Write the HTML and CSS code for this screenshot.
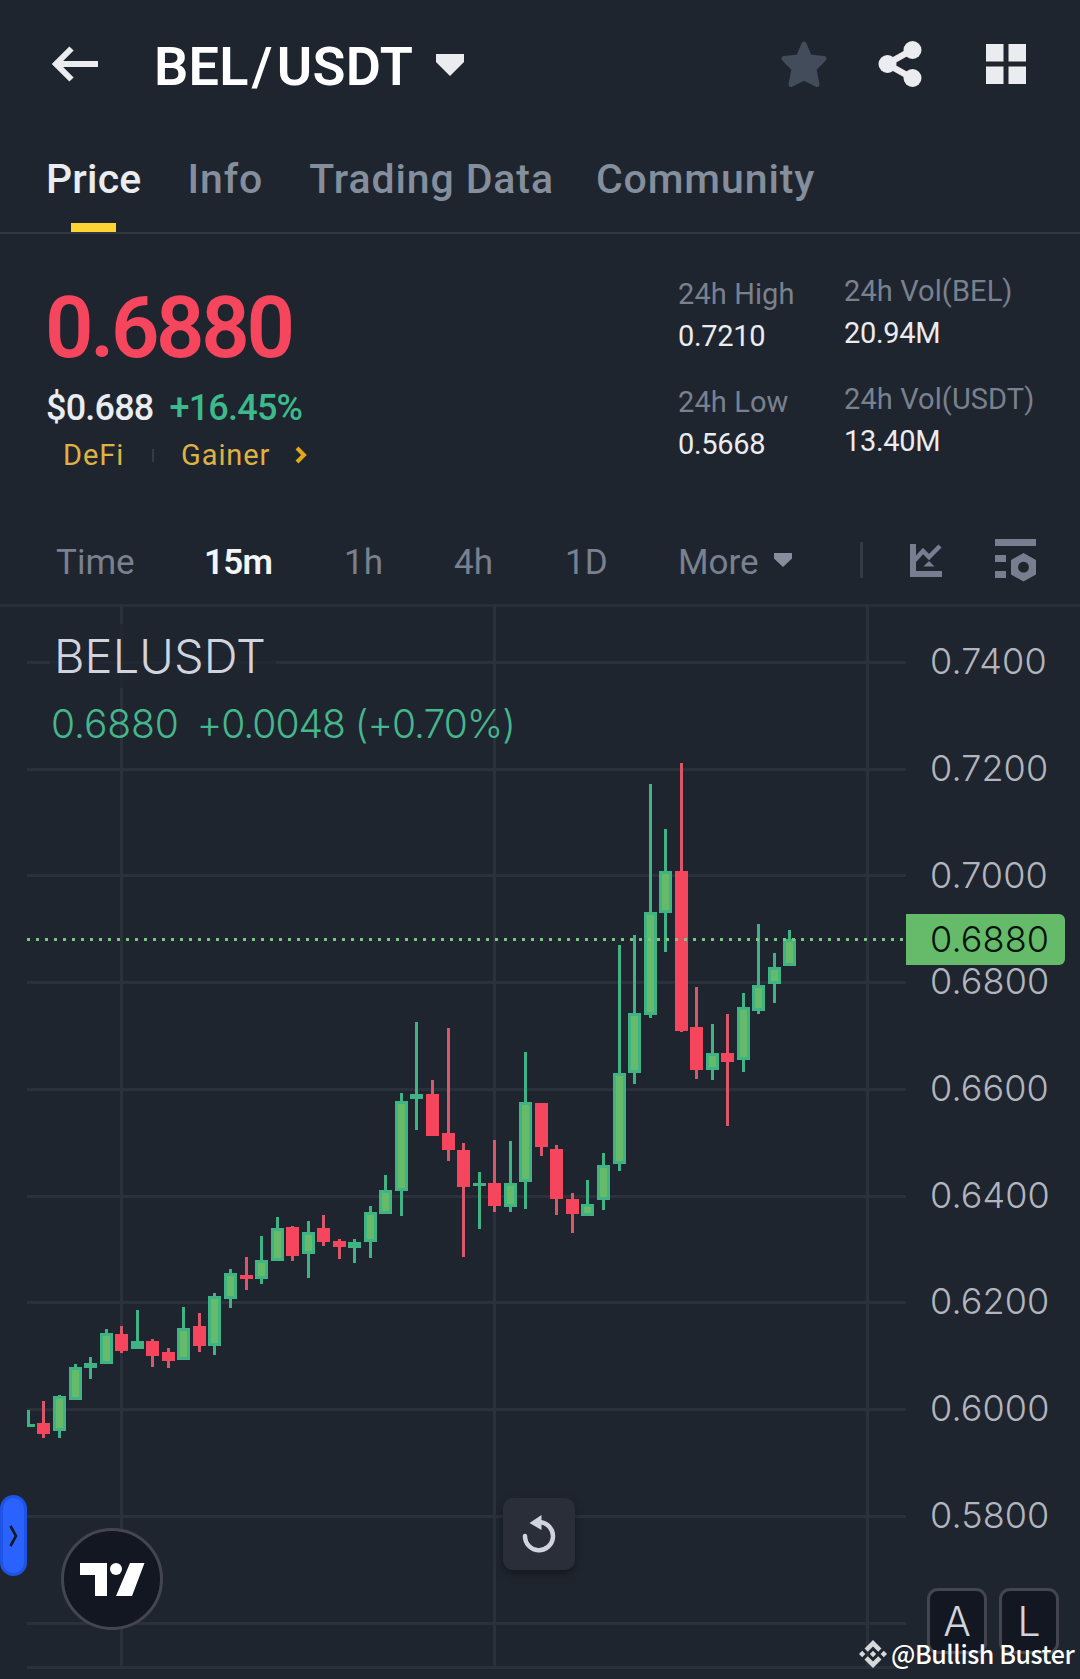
FILE: index.html
```
<!DOCTYPE html>
<html lang="en">
<head>
    <meta charset="UTF-8">
    <meta name="viewport" content="width=device-width, initial-scale=1.0">
    <title>BEL/USDT</title>
    <link rel="stylesheet" href="styles.css">
</head>
<body>

    <header class="header">
        <svg class="back" width="46" height="36" viewBox="0 0 46 36">
            <path d="M19.500 2.500L4 18L19.500 33.500M4 18H46" fill="none" stroke="#eaecef" stroke-width="6"/>
        </svg>
        <h1 class="pair">BEL<span class="slash">/</span>USDT</h1>
        <svg class="caret" width="28" height="22" viewBox="0 0 28 22">
            <path d="M0 0H28V8L14 22L0 8Z" fill="#eaecef"/>
        </svg>
        <div class="actions">
            <svg width="46" height="46" viewBox="0 0 46 46">
                <path d="M23 3L28.500 16L43 17.500L33 28L36 43.500L23 37L10 43.500L13 28L3 17.500L17.500 16Z" fill="#434c5a" stroke="#434c5a" stroke-width="5" stroke-linejoin="round"/>
            </svg>
            <svg width="44" height="46" viewBox="0 0 44 46">
                <path d="M34 9L9 23L34 37" fill="none" stroke="#eaecef" stroke-width="6.500"/>
                <circle cx="34.500" cy="9" r="9" fill="#eaecef"/>
                <circle cx="9.500" cy="23" r="9" fill="#eaecef"/>
                <circle cx="34.500" cy="37" r="9" fill="#eaecef"/>
            </svg>
            <svg width="40" height="40" viewBox="0 0 40 40">
                <path d="M0 0h17.500v17.500H0zM22.500 0H40v17.500H22.500zM0 22.500h17.500V40H0zM22.500 22.500H40V40H22.500z" fill="#eaecef"/>
            </svg>
        </div>
    </header>

    <nav class="tabs">
        <a class="tab active">Price</a>
        <a class="tab">Info</a>
        <a class="tab trading">Trading Data</a>
        <a class="tab">Community</a>
    </nav>

    <section class="ticker">
        <div class="quote">
            <div class="last">0.6880</div>
            <div class="sub"><span class="usd">$0.688</span><span class="change">+16.45%</span></div>
            <div class="tags">
                <span>DeFi</span>
                <i class="tag-sep"></i>
                <span>Gainer</span>
                <svg width="12" height="18" viewBox="0 0 12 18">
                    <path d="M2 2L9 9L2 16" fill="none" stroke="#e0a91b" stroke-width="4"/>
                </svg>
            </div>
        </div>
        <div class="stats">
            <div class="stat"><span class="label">24h High</span><span class="value">0.7210</span></div>
            <div class="stat"><span class="label">24h Low</span><span class="value">0.5668</span></div>
        </div>
        <div class="stats volume">
            <div class="stat"><span class="label">24h Vol(BEL)</span><span class="value">20.94M</span></div>
            <div class="stat"><span class="label">24h Vol(USDT)</span><span class="value">13.40M</span></div>
        </div>
    </section>

    <nav class="intervals">
        <a class="time">Time</a>
        <a class="m15 active">15m</a>
        <a class="h1">1h</a>
        <a class="h4">4h</a>
        <a class="d1">1D</a>
        <a class="more">More</a>
        <svg class="more-caret" width="18" height="14" viewBox="0 0 18 14">
            <path d="M0 0H18V5.500L9 14L0 5.500Z" fill="#848e9c"/>
        </svg>
        <i class="bar-sep"></i>
        <svg class="ico-chart" width="32" height="33" viewBox="0 0 32 33">
            <path d="M0 0H6V27H32V33H0Z" fill="#767e90"/>
            <path d="M4 17L13 7L19 13L30 2" fill="none" stroke="#767e90" stroke-width="4.500"/>
            <path d="M19 17L24.500 22.500H13.500Z" fill="#767e90"/>
        </svg>
        <svg width="41" height="43" viewBox="0 0 41 43">
            <path d="M0 0H41V7H0ZM0 16H11V23H0ZM0 32H11V39H0Z" fill="#767e90"/>
            <path fill-rule="evenodd" d="M28.500 14L41 21V35.500L28.500 42.500L16 35.500V21ZM28.500 22.800a5.400 5.400 0 1 0 0.010 0Z" fill="#767e90"/>
        </svg>
    </nav>

    <main class="chart">
        <svg class="plot" id="plot" width="1080" height="1075" viewBox="0 604 1080 1075" shape-rendering="crispEdges"></svg>

        <div class="legend">
            <div class="symbol"><span>BELUSDT</span></div>
            <div class="ohlc"><span class="legend-price">0.6880</span><span class="legend-change">+0.0048 (+0.70%)</span></div>
        </div>

        <div class="axis">
            <span>0.7400</span>
            <span>0.7200</span>
            <span>0.7000</span>
            <span>0.6800</span>
            <span>0.6600</span>
            <span>0.6400</span>
            <span>0.6200</span>
            <span>0.6000</span>
            <span>0.5800</span>
        </div>
        <div class="price-tag">0.6880</div>

        <div class="handle">
            <svg width="9" height="22" viewBox="0 0 9 22">
                <path d="M1.500 1L7 11L1.500 21" fill="none" stroke="#131722" stroke-width="2.600"/>
            </svg>
        </div>

        <div class="tv-logo">
            <svg width="65" height="33" viewBox="0 0 65 33">
                <path d="M0 0H27V33H15V12H0ZM50 0H64.500L52 33H36Z" fill="#fff"/>
                <circle cx="36" cy="6" r="6" fill="#fff"/>
            </svg>
        </div>

        <button class="reset">
            <svg width="34" height="38" viewBox="0 0 34 38">
                <path d="M3 21A14 14 0 1 0 19 7.300" fill="none" stroke="#d1d4dc" stroke-width="4.500" stroke-linecap="round"/>
                <path d="M7.500 8L19.500 0V15Z" fill="#d1d4dc"/>
            </svg>
        </button>

        <div class="scale-btns">
            <button>A</button>
            <button>L</button>
        </div>

        <div class="credit">
            <svg width="28" height="28" viewBox="0 0 28 28" fill="#d6d8da">
                <path d="M14 0L22.500 8.500L19.200 11.800L14 6.600L8.800 11.800L5.500 8.500Z"/>
                <path d="M14 28L22.500 19.500L19.200 16.200L14 21.400L8.800 16.200L5.500 19.500Z"/>
                <path d="M14 10.800L17.200 14L14 17.200L10.800 14ZM3.200 10.800L6.400 14L3.200 17.200L0 14ZM24.800 10.800L28 14L24.800 17.200L21.600 14Z"/>
            </svg>
            <span>@Bullish Buster</span>
        </div>
    </main>

    <script>
        // x, high, body top, body bottom, low, up?
        const candles = [
            [43, 1401, 1423, 1434, 1438, 0],
            [59, 1395, 1396, 1431, 1438, 1],
            [75, 1364, 1367, 1400, 1400, 1],
            [90, 1357, 1363, 1368, 1379, 1],
            [106, 1329, 1333, 1364, 1364, 1],
            [121, 1326, 1334, 1351, 1353, 0],
            [137, 1310, 1341, 1349, 1349, 1],
            [152, 1339, 1341, 1356, 1367, 0],
            [168, 1348, 1352, 1361, 1368, 0],
            [183, 1307, 1328, 1360, 1360, 1],
            [199, 1313, 1326, 1346, 1352, 0],
            [214, 1293, 1296, 1346, 1355, 1],
            [230, 1269, 1273, 1299, 1308, 1],
            [246, 1257, 1275, 1279, 1290, 0],
            [261, 1236, 1260, 1279, 1284, 1],
            [277, 1217, 1228, 1261, 1261, 1],
            [292, 1226, 1227, 1256, 1261, 0],
            [308, 1221, 1232, 1254, 1278, 1],
            [323, 1215, 1228, 1242, 1246, 0],
            [339, 1239, 1241, 1247, 1259, 0],
            [354, 1239, 1242, 1248, 1263, 1],
            [370, 1206, 1212, 1242, 1258, 1],
            [385, 1175, 1190, 1214, 1214, 1],
            [401, 1093, 1101, 1191, 1216, 1],
            [416, 1022, 1094, 1099, 1130, 1],
            [432, 1080, 1094, 1136, 1136, 0],
            [448, 1028, 1133, 1150, 1161, 0],
            [463, 1143, 1150, 1187, 1257, 0],
            [479, 1172, 1183, 1186, 1229, 1],
            [494, 1140, 1183, 1206, 1212, 0],
            [510, 1141, 1183, 1207, 1212, 1],
            [525, 1052, 1102, 1182, 1209, 1],
            [541, 1103, 1103, 1147, 1156, 0],
            [556, 1145, 1149, 1199, 1215, 0],
            [572, 1193, 1199, 1214, 1233, 0],
            [587, 1180, 1204, 1216, 1216, 1],
            [603, 1153, 1165, 1200, 1210, 1],
            [619, 945, 1073, 1164, 1171, 1],
            [634, 935, 1013, 1073, 1084, 1],
            [650, 784, 912, 1015, 1018, 1],
            [665, 829, 871, 913, 952, 1],
            [681, 763, 871, 1031, 1032, 0],
            [696, 987, 1027, 1070, 1079, 0],
            [712, 1024, 1053, 1070, 1080, 1],
            [727, 1014, 1053, 1062, 1126, 0],
            [743, 993, 1007, 1060, 1072, 1],
            [758, 924, 985, 1011, 1014, 1],
            [774, 953, 967, 984, 1003, 1],
            [789, 930, 939, 966, 966, 1]
        ];
        const rows = [661, 768, 874, 981, 1088, 1195, 1301, 1408, 1515, 1622, 1666];
        const cols = [120, 493, 866];

        const rect = function(x, y, w, h, cls) {
            return `<rect class="${cls}" x="${x}" y="${y}" width="${w}" height="${h}"/>`;
        }

        let out = rect(0, 604, 1080, 3, 'top-line');
        rows.forEach(y => out += rect(27, y, 879, 3, 'grid'));
        cols.forEach(x => out += rect(x, 604, 3, 1063, 'grid'));

        // first candle is cut off by the left edge of the pane
        out += rect(27, 1410, 3, 17, 'up-wick') + rect(27, 1424, 8, 3, 'up-wick');

        candles.forEach(([x, high, top, bottom, low, up]) => {
            const dir = up ? 'up' : 'down';
            out += rect(x - 1, high, 3, low - high, dir + '-wick');
            out += rect(x - 6, top, 13, bottom - top, dir);
            if (up && bottom - top > 8) {
                out += rect(x - 3, top + 3, 7, bottom - top - 6, 'up-fill');
            }
        });

        out += '<line class="last-line" x1="27" x2="906" y1="939.500" y2="939.500"/>';
        document.getElementById('plot').innerHTML = out;
    </script>

</body>
</html>
```
FILE: styles.css
```
* {
    box-sizing: border-box;
}
body {
    margin: 0;
    width: 1080px;
    height: 1679px;
    overflow: hidden;
    background-color: #1f252f;
    color: #eaecef;
    font-family: Roboto, "Liberation Sans", sans-serif;
}
svg {
    display: block;
    flex: none;
}
a, span, div, h1 {
    white-space: nowrap;
}
.header {
    display: flex;
    align-items: center;
    height: 128px;
    padding: 0 54px 0 52px;
}
.pair {
    margin: 4px 0 0 56px;
    width: 260px;
    font-size: 54px;
    font-weight: 600;
    letter-spacing: 0.3px;
    color: #fff;
}
.slash {
    margin: 0 4px 0 3px;
}
.caret {
    margin: 2px 0 0 22px;
}
.actions {
    display: flex;
    align-items: center;
    gap: 51px;
    margin-left: auto;
}
.actions svg:last-child {
    margin-left: 13px;
}
.tabs {
    display: flex;
    height: 106px;
    padding: 27px 47px 0 46px;
    gap: 46px;
    border-bottom: 2px solid #303741;
    font-size: 41px;
    font-weight: 500;
    letter-spacing: 0.9px;
    color: #848e9c;
}
.tab.active {
    display: flex;
    flex-direction: column;
    align-items: center;
    justify-content: space-between;
    letter-spacing: 0.2px;
    color: #eaecef;
}
.tab.active::after {
    content: "";
    width: 45px;
    height: 9px;
    background-color: #fcd535;
}
.trading {
    margin-right: -4px;
}
.ticker {
    display: flex;
    height: 256px;
    padding-left: 46px;
}
.quote {
    width: 632px;
}
.last {
    margin: 44px 0 0 -1px;
    font-size: 85px;
    line-height: 100px;
    font-weight: 600;
    letter-spacing: -3.4px;
    color: #f6465d;
}
.sub {
    display: flex;
    gap: 16px;
    margin-top: 9px;
    font-size: 36px;
    line-height: 42px;
    font-weight: 500;
    letter-spacing: -0.8px;
}
.change {
    color: #3cba8b;
}
.tags {
    display: flex;
    align-items: center;
    margin-top: 9px;
    padding-left: 17px;
    font-size: 29px;
    line-height: 34px;
    letter-spacing: 0.9px;
    color: #dfb244;
}
.tag-sep {
    width: 2px;
    height: 13px;
    margin: 0 27px 0 28px;
    background-color: #343b46;
}
.tags svg {
    margin-left: 25px;
}
.stats {
    width: 166px;
    padding-top: 43px;
}
.stats.volume {
    width: 200px;
    padding-top: 40px;
}
.stat {
    display: flex;
    flex-direction: column;
    gap: 8px;
    height: 108px;
    font-size: 29px;
    line-height: 34px;
}
.label {
    letter-spacing: 0.1px;
    color: #79818f;
}
.value {
    letter-spacing: -0.3px;
}
.intervals {
    display: flex;
    align-items: center;
    height: 114px;
    padding: 26px 0 0 56px;
    font-size: 35px;
    color: #79818f;
}
.intervals a {
    flex: none;
    padding-top: 5px;
}
.intervals .active {
    font-weight: 600;
    letter-spacing: -0.8px;
    color: #f4f5f7;
}
.time {
    width: 148px;
}
.m15 {
    width: 140px;
}
.h1 {
    width: 110px;
}
.h4 {
    width: 111px;
}
.d1 {
    width: 113px;
}
.more {
    width: 96px;
}
.bar-sep {
    width: 3px;
    height: 36px;
    margin: 0 47px 0 68px;
    background-color: #343b46;
}
.ico-chart {
    margin-right: 53px;
}
.chart {
    position: relative;
    height: 1075px;
    font-family: Inter, "Liberation Sans", sans-serif;
    font-weight: 300;
}
.top-line {
    fill: #272e38;
}
.grid {
    fill: #2a313b;
}
.up, .up-wick {
    fill: #3fb383;
}
.up-fill {
    fill: #66bb6a;
}
.down {
    fill: #f6465d;
}
.down-wick {
    fill: #d9566b;
}
.last-line {
    stroke: #7cc77f;
    stroke-width: 3;
    stroke-dasharray: 3 6;
}
.legend {
    position: absolute;
    top: 20px;
    left: 50px;
}
.symbol {
    width: 226px;
    padding-left: 4px;
    background-color: rgba(31, 37, 47, 0.7);
    font-size: 47px;
    line-height: 64px;
    letter-spacing: 0.1px;
    color: #d1d4dc;
}
.ohlc {
    display: flex;
    gap: 18px;
    margin-top: 8px;
    padding-left: 1px;
    font-size: 39px;
    line-height: 56px;
    color: #46b68c;
}
.legend-price {
    letter-spacing: -0.1px;
}
.legend-change {
    letter-spacing: -1px;
}
.axis {
    position: absolute;
    top: 4px;
    left: 930px;
    font-size: 36px;
    letter-spacing: 0.1px;
    color: #b2b5be;
}
.axis span {
    display: flex;
    align-items: center;
    height: 106.7px;
}
.price-tag {
    position: absolute;
    top: 310px;
    left: 906px;
    width: 159px;
    height: 51px;
    padding-left: 24px;
    border-radius: 0 6px 6px 0;
    background-color: #66bb6a;
    font-size: 36px;
    line-height: 51px;
    letter-spacing: 0.1px;
    color: #06130a;
}
.handle {
    position: absolute;
    top: 891px;
    left: 0;
    display: flex;
    align-items: center;
    justify-content: center;
    width: 27px;
    height: 81px;
    border: 3px solid #1e53e5;
    border-radius: 14px;
    background-color: #2962ff;
}
.tv-logo {
    position: absolute;
    top: 924px;
    left: 61px;
    display: flex;
    align-items: center;
    justify-content: center;
    width: 102px;
    height: 102px;
    border: 3px solid #434651;
    border-radius: 50%;
    background-color: #131722;
}
.reset {
    position: absolute;
    top: 894px;
    left: 503px;
    display: flex;
    align-items: center;
    justify-content: center;
    width: 72px;
    height: 72px;
    padding: 0;
    border: none;
    border-radius: 10px;
    background-color: #2a2e39;
    box-shadow: 0 4px 8px rgba(0, 0, 0, 0.35);
}
.scale-btns {
    position: absolute;
    top: 984px;
    left: 927px;
    display: flex;
    gap: 12px;
}
.scale-btns button {
    width: 60px;
    height: 66px;
    padding: 0;
    border: 3px solid #434651;
    border-radius: 11px;
    background-color: #131722;
    font: 300 41px Inter, sans-serif;
    color: #d1d4dc;
}
.credit {
    position: absolute;
    top: 1033px;
    left: 859px;
    display: flex;
    align-items: center;
    gap: 4px;
    font-family: "Noto Sans CJK SC", sans-serif;
    font-size: 25px;
    font-weight: 500;
    line-height: 36px;
    color: #fff;
}
.credit span {
    margin-top: -2px;
    letter-spacing: -0.4px;
}
```
